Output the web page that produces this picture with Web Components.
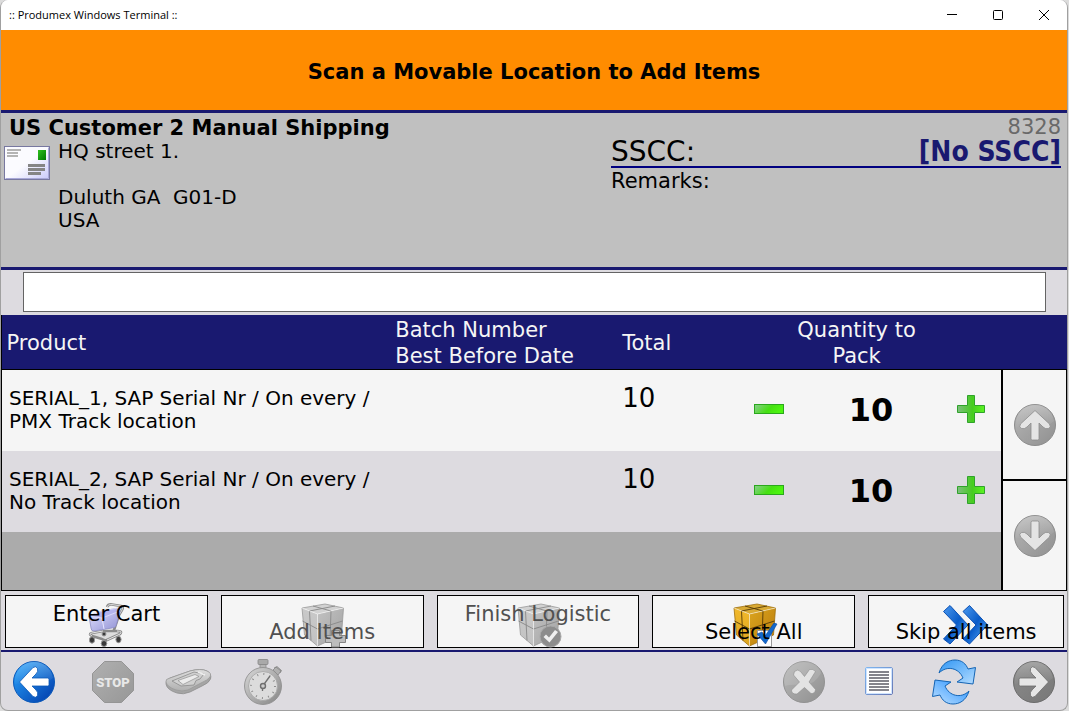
<!DOCTYPE html>
<html lang="en">
<head>
<meta charset="utf-8">
<meta name="viewport" content="width=device-width, initial-scale=1">
<title>:: Produmex Windows Terminal ::</title>
<style>
    body {
        margin: 0;
        background: #dcdcdc;
        font-family: "DejaVu Sans", Verdana, sans-serif;
        font-size: 20px;
        line-height: 23px;
        color: #000;
    }
</style>
</head>
<body>
<terminal-window>
    <title-bar>:: Produmex Windows Terminal ::</title-bar>
    <task-banner>Scan a Movable Location to Add Items</task-banner>
    <shipment-info sscc="[No SSCC]" number="8328">
        <span slot="customer">US Customer 2 Manual Shipping</span>
        <span slot="address">HQ street 1.<br><br>Duluth GA&nbsp; G01-D<br>USA</span>
    </shipment-info>
    <scan-field></scan-field>
    <pack-list></pack-list>
    <action-bar>
        <action-button icon="cart" align="top">Enter Cart</action-button>
        <action-button icon="box-add" disabled>Add Items</action-button>
        <action-button icon="box-done" align="top" disabled>Finish Logistic</action-button>
        <action-button icon="box-check">Select All</action-button>
        <action-button icon="skip">Skip all items</action-button>
    </action-bar>
    <tool-bar></tool-bar>
</terminal-window>

<script>
const ARROW = 'M24 9.500 L38.500 23 Q40.500 26 37.500 27.500 Q34.500 28.500 32 26 L28 22 V37.500 Q28 39 26.500 39 H21.500 Q20 39 20 37.500 V22 L16 26 Q13.500 28.500 10.500 27.500 Q7.500 26 9.500 23 Z';

// round button with an arrow, the arrow points up at angle 0
function disc(from, to, edge, fill, angle) {
    return `<svg viewBox="0 0 48 48" width="48" height="48">
        <defs>
            <linearGradient id="d" x1="0" y1="0" x2="1" y2="1"><stop offset="0" stop-color="${from}"/><stop offset="1" stop-color="${to}"/></linearGradient>
            <linearGradient id="s" x1="0" y1="0" x2="0" y2="1"><stop offset="0" stop-color="#fff" stop-opacity=".25"/><stop offset="1" stop-color="#fff" stop-opacity="0"/></linearGradient>
        </defs>
        <circle cx="24" cy="24" r="20.500" fill="url(#d)" stroke="${edge}"/>
        <path d="M5 26 A19 19 0 0 1 43 20 Q32 30 20 27 Q12 25 5 26Z" fill="url(#s)"/>
        <path d="${ARROW}" fill="${fill}" stroke="${edge}" stroke-width=".8" transform="rotate(${angle} 24 24)"/>
    </svg>`;
}

function box(c, extra) {
    return `<svg viewBox="0 0 46 44" width="46" height="44">
        <defs>
            <linearGradient id="l" x1="0" y1="0" x2="0" y2="1"><stop offset="0" stop-color="${c.light}"/><stop offset="1" stop-color="${c.mid}"/></linearGradient>
            <linearGradient id="r" x1="0" y1="0" x2="1" y2="1"><stop offset="0" stop-color="${c.mid}"/><stop offset="1" stop-color="${c.dark}"/></linearGradient>
        </defs>
        <path d="M3 5 L18.500 11 V43 L5.500 32Z" fill="url(#l)"/>
        <path d="M18.500 11 L44.500 5 L42.500 32 L18.500 43Z" fill="url(#r)"/>
        <path d="M3 5 L26 1 L44.500 5 L18.500 11Z" fill="${c.top}"/>
        <path d="M3 5 L26 1 L44.500 5 L42.500 32 L18.500 43 L5.500 32Z" fill="none" stroke="${c.edge}" stroke-width=".8" stroke-linejoin="round"/>
        <path d="M3.500 18 L18.500 26 L43.500 18 M10.500 8 L12 37.500 M32 8 L31 37.500 M10.500 8 L36 3 M14 3 L32 8" fill="none" stroke="${c.seam}" stroke-width=".9"/>
        <path d="M3 5 L18.500 11 L44.500 5 M18.500 11 V43" fill="none" stroke="#fff" stroke-opacity=".5"/>
        ${extra}
    </svg>`;
}

const GREY_BOX = { light: '#c9c9c9', mid: '#c2c2c2', dark: '#a2a2a2', top: '#d2d2d2', edge: '#999', seam: '#888' };
const GOLD_BOX = { light: '#f2b92c', mid: '#dba51f', dark: '#b97a0a', top: '#d9aa34', edge: '#a0700c', seam: '#543a08' };
const SWIRL = 'M9 15 C12 5 19 2 25 2 C32 2 36 6 38 11 L45.500 9.500 L43 26 L27 24 L33 20 C29 10 17 7 9 15Z';

const ICONS = {
    back: disc('#2aa8ff', '#0038a8', '#0a58b8', '#fff', 270),
    next: disc('#8c8c8c', '#777', '#6c6c6c', '#e6e6e6', 90),
    up: disc('#b6b6b6', '#909090', '#8c8c8c', '#e4e4e4', 0),
    down: disc('#b6b6b6', '#909090', '#8c8c8c', '#e4e4e4', 180),

    cancel: `<svg viewBox="0 0 48 48" width="48" height="48">
        <defs><linearGradient id="d" x1="0" y1="0" x2="1" y2="1"><stop offset="0" stop-color="#b8b8b8"/><stop offset="1" stop-color="#8f8f8f"/></linearGradient></defs>
        <circle cx="24" cy="24" r="20.500" fill="url(#d)" stroke="#929292"/>
        <path d="M5 28 A19 19 0 0 1 41 15 Q34 28 22 27 Q10 26 5 28Z" fill="#fff" fill-opacity=".12"/>
        <path d="M14.500 13.500 Q18 10.500 20.500 13.500 L24.500 18.500 L29.500 11.500 Q33 10.500 35.500 13.500 L29 24 L35.500 31.500 Q35 36 31 35.500 L24.500 29.500 L17 36 Q11.500 36.500 11.500 32 L19.500 24 L13.500 17Z" fill="#e3e3e3" stroke="#8d8d8d" stroke-width=".6"/>
    </svg>`,

    stop: `<svg viewBox="0 0 48 48" width="48" height="48">
        <defs><linearGradient id="d" x1="0" y1="0" x2="1" y2="1"><stop offset="0" stop-color="#b0b0b0"/><stop offset="1" stop-color="#979797"/></linearGradient></defs>
        <path d="M15.500 3.500 H32.500 L44.500 15.500 V32.500 L32.500 44.500 H15.500 L3.500 32.500 V15.500Z" fill="url(#d)" stroke="#959595"/>
        <text x="24" y="29" text-anchor="middle" font-family="Roboto, Liberation Sans, sans-serif" font-weight="900" font-size="13" fill="#e8e8e8">STOP</text>
    </svg>`,

    scanner: `<svg viewBox="0 0 48 48" width="48" height="48">
        <defs><linearGradient id="d" x1="0" y1="0" x2="0" y2="1"><stop offset="0" stop-color="#dedede"/><stop offset="1" stop-color="#b0b0b0"/></linearGradient></defs>
        <path d="M2 26 Q1 22 6 20 L26 13 Q37 10 43 13 Q48 16 46.500 21 Q45 25 38 28 L26 34 Q19 37 13 35 Q3 32 2 26Z" fill="#a5a5a5" stroke="#8d8d8d" stroke-width=".8"/>
        <path d="M2 24 Q1 21 6 20 L26 13 Q37 10 43 13 Q48 15 46 19 Q44 22 37 25 L24 32 Q18 34 12 32 Q3 29 2 24Z" fill="url(#d)" stroke="#999" stroke-width=".8"/>
        <path d="M8 23 L30 14 L40 16 L36 21 L32 22.500 L30 27 L17 28Z" fill="#d0d0d0" stroke="#8c8c8c" stroke-width=".8"/>
        <path d="M14 22.500 L31 16.500 L35 18.500 L19 26.500Z" fill="#ececec" stroke="#909090" stroke-width=".7"/>
        <path d="M34 14 L41 17" stroke="#eee" stroke-width="1.500"/>
    </svg>`,

    timer: `<svg viewBox="0 0 48 48" width="48" height="48">
        <defs><linearGradient id="d" x1="0" y1="0" x2="1" y2="1"><stop offset="0" stop-color="#d8d8d8"/><stop offset="1" stop-color="#858585"/></linearGradient></defs>
        <rect x="21" y="6" width="6" height="6" fill="#b5b5b5" stroke="#8c8c8c" stroke-width=".8"/>
        <rect x="19" y="1.500" width="10" height="5" rx="1" fill="#a9a9a9" stroke="#858585" stroke-width=".8"/>
        <path d="M34 12 L37 9 L42 13 L39 17Z M35 10 L38 8.500 L42.500 12.500 L41 15" fill="#b0b0b0" stroke="#858585" stroke-width=".8"/>
        <circle cx="24" cy="28" r="18.500" fill="url(#d)" stroke="#8a8a8a" stroke-width=".8"/>
        <circle cx="24" cy="28" r="14.500" fill="#dcdcdc" stroke="#a3a3a3" stroke-width=".8"/>
        <circle cx="24" cy="28" r="12" fill="none" stroke="#8d8d8d" stroke-width="2" stroke-dasharray="1 5.283"/>
        <path d="M23 29 L31 18" stroke="#6f6f6f" stroke-width="1.300"/>
        <circle cx="24" cy="28" r="2.500" fill="#ccc" stroke="#6f6f6f" stroke-width="1.400"/>
        <path d="M23.500 30 V33" stroke="#6f6f6f" stroke-width="1.300"/>
    </svg>`,

    list: `<svg viewBox="0 0 48 48" width="48" height="48">
        <defs><linearGradient id="d" x1="0" y1="0" x2="1" y2="1"><stop offset="0" stop-color="#7fb6f0"/><stop offset="1" stop-color="#6878b4"/></linearGradient></defs>
        <rect x="10.500" y="9.500" width="27" height="27" rx="1.500" fill="#fff" stroke="url(#d)"/>
        <rect x="11.500" y="10.500" width="25" height="25" fill="none" stroke="#cfe4ff"/>
        <path d="M14 14h20M14 17h20M14 20h20M14 23h20M14 26h20M14 29h20M14 32h20" stroke="#84848c" stroke-width="1.800"/>
    </svg>`,

    refresh: `<svg viewBox="0 0 48 48" width="48" height="48">
        <defs><linearGradient id="d" x1="0" y1="0" x2="1" y2="1"><stop offset="0" stop-color="#2f96f5"/><stop offset="1" stop-color="#b4dcff"/></linearGradient>
        <linearGradient id="e" x1="1" y1="0" x2="0" y2="1"><stop offset="0" stop-color="#c0e2ff"/><stop offset="1" stop-color="#1e8cff"/></linearGradient></defs>
        <path d="${SWIRL}" fill="url(#d)" stroke="#1464b4" stroke-linejoin="round"/>
        <path d="${SWIRL}" fill="url(#e)" stroke="#1464b4" stroke-linejoin="round" transform="rotate(180 24 24)"/>
    </svg>`,

    minus: `<svg viewBox="0 0 30 10" width="30" height="10">
        <defs><linearGradient id="d" x1="0" y1="0" x2="1" y2=".3"><stop offset=".1" stop-color="#7fcf7c"/><stop offset=".6" stop-color="#45e012"/><stop offset="1" stop-color="#4df510"/></linearGradient></defs>
        <rect x=".5" y=".5" width="29" height="9" fill="url(#d)" stroke="#2aa81c"/>
    </svg>`,

    plus: `<svg viewBox="0 0 28 28" width="28" height="28">
        <defs><linearGradient id="d" x1="0" y1="0" x2="1" y2="0"><stop offset="0" stop-color="#7fbd80"/><stop offset=".55" stop-color="#46cc20"/><stop offset="1" stop-color="#5cf522"/></linearGradient></defs>
        <path d="M10.500 .5H17.500V10.500H27.500V17.500H17.500V27.500H10.500V17.500H.5V10.500H10.500Z" fill="url(#d)" stroke="#2fa32a"/>
    </svg>`,

    envelope: `<svg viewBox="0 0 46 34" width="46" height="34">
        <defs><linearGradient id="d" x1="0" y1="0" x2="1" y2="1"><stop offset=".5" stop-color="#fbfbff"/><stop offset="1" stop-color="#c8c8fa"/></linearGradient>
        <linearGradient id="g" x1="0" y1="0" x2="1" y2="1"><stop offset="0" stop-color="#30c020"/><stop offset="1" stop-color="#007800"/></linearGradient></defs>
        <rect x=".5" y=".5" width="45" height="33" fill="url(#d)" stroke="#7878a0"/>
        <path d="M1.500 32.500 H44.500 V1.500" fill="none" stroke="#a8a8d8"/>
        <path d="M3 4h14M3 7h11M3 10h11" stroke="#b4b4b4" stroke-width="2"/>
        <path d="M24 19.500h17M24 23.500h17M24 27.500h13" stroke="#858585" stroke-width="3"/>
        <rect x="34" y="4" width="8" height="10" fill="url(#g)"/>
    </svg>`,

    cart: `<svg viewBox="0 0 46 44" width="46" height="44">
        <defs><linearGradient id="d" x1="0" y1="0" x2="1" y2="1"><stop offset="0" stop-color="#e4e4ff"/><stop offset="1" stop-color="#9090d4"/></linearGradient></defs>
        <path d="M24 4 Q25 1 29 1.500 L38 3 Q41 4 39 7 L36 12 L30 30" fill="none" stroke="#8a8a8a" stroke-width="2.600"/>
        <path d="M24 4 Q25 1 29 1.500 L38 3 Q41 4 39 7 L36 12" fill="none" stroke="#d8d8d8" stroke-width="1"/>
        <path d="M9 33 Q5 31 9 30 L20 28 L34 28 Q40 28 37 31 L24 37 Q22 38 19 36Z" fill="#ddd" stroke="#8a8a8a" stroke-width="2.600" stroke-linejoin="round"/>
        <path d="M9 33 Q5 31 9 30 L20 28 M34 28 Q40 28 37 31 L24 37" fill="none" stroke="#e4e4e4"/>
        <path d="M6 13 L19 8 L36 5 L37 9 L33 23 Q32 25 29 25 L11 28 Q8 28 8 25Z" fill="url(#d)" stroke="#8c8cc4" stroke-width=".8"/>
        <path d="M6 13 L19 15 L37 8 L35 5 L19 8Z" fill="#b4b4ec" stroke="#e8e8ff" stroke-width=".7"/>
        <path d="M19 15 L21 26" stroke="#e6e6ff"/>
        <g fill="#3a3a3a" stroke="#999"><ellipse cx="9" cy="37" rx="2.600" ry="3.200"/><ellipse cx="21" cy="40.500" rx="2.800" ry="3"/><ellipse cx="35.500" cy="36.500" rx="2.600" ry="3.200"/><ellipse cx="21" cy="31" rx="2" ry="2"/></g>
    </svg>`,

    // the plus runs past the lower edge of its button
    'box-add': box(GREY_BOX, '<path d="M32.500 27.500h8v5h6v7h-6v4.500h-8v-4.500h-6v-7h6z" fill="#bdbdbd" stroke="#858585"/>'),
    'box-done': box(GREY_BOX, `<circle cx="35.500" cy="33.500" r="10.500" fill="#8d8d8d" stroke="#a8a8a8"/>
        <path d="M28.500 34 L31 31.500 L34 34.500 L40 27 L43 29 L34.500 39.500Z" fill="#efefef"/>`),
    'box-check': box(GOLD_BOX, `<rect x="26.500" y="27.500" width="14" height="16" fill="#fff" stroke="#999"/>
        <path d="M26 31 L31 29 L34 33 L43 20 L46 21 L34.500 41Z" fill="#1268cc" stroke="#0a48a0" stroke-width=".6"/>`),

    skip: `<svg viewBox="0 0 46 44" width="46" height="44">
        <defs><linearGradient id="d" x1="0" y1="0" x2="1" y2="1"><stop offset="0" stop-color="#4c9af0"/><stop offset=".5" stop-color="#0a5cc8"/><stop offset="1" stop-color="#5cb0ff"/></linearGradient></defs>
        <g fill="url(#d)" stroke="#0a50b4">
            <path d="M.5 8.500 L7 2.500 L25 22 L7 41 L.5 36 L13.500 22Z"/>
            <path d="M20 8.500 L26.500 2.500 L44.500 22 L26.500 41 L20 36 L33 22Z"/>
        </g>
    </svg>`
};

class AppIcon extends HTMLElement {
    connectedCallback() {
        this.attachShadow({ mode: 'open' });
        this.shadowRoot.innerHTML = `
            <style>
                :host { display: inline-flex; flex: none; }
                svg { display: block; overflow: visible; }
            </style>
            ${ICONS[this.getAttribute('name')] || ''}
        `;
    }
}
customElements.define('app-icon', AppIcon);

class TerminalWindow extends HTMLElement {
    connectedCallback() {
        this.attachShadow({ mode: 'open' });
        this.shadowRoot.innerHTML = `
            <style>
                :host {
                    display: flex;
                    flex-direction: column;
                    box-sizing: border-box;
                    min-height: 100vh;
                    margin-right: 1px;
                    border: 1px solid #a0a0a0;
                    border-top: 0;
                    border-radius: 8px;
                    background: #dddbe0;
                    overflow: hidden;
                }
                ::slotted(pack-list) { flex: 1; }
            </style>
            <slot></slot>
        `;
    }
}
customElements.define('terminal-window', TerminalWindow);

class TitleBar extends HTMLElement {
    connectedCallback() {
        this.attachShadow({ mode: 'open' });
        this.shadowRoot.innerHTML = `
            <style>
                :host {
                    display: flex;
                    align-items: center;
                    height: 30px;
                    background: #fff;
                    font: 11px/16px "Open Sans", "Segoe UI", sans-serif;
                }
                .title { flex: 1; padding-left: 8px; }
                button {
                    display: grid;
                    place-items: center;
                    width: 46px;
                    height: 30px;
                    padding: 0;
                    border: 0;
                    background: none;
                }
                button:hover { background: #e5e5e5; }
                svg { fill: none; stroke: #000; }
            </style>
            <span class="title"><slot></slot></span>
            <button aria-label="Minimize"><svg width="10" height="10"><path d="M0 4.500H10"/></svg></button>
            <button aria-label="Maximize"><svg width="10" height="10"><rect x=".5" y=".5" width="9" height="9" rx="1"/></svg></button>
            <button aria-label="Close"><svg width="10" height="10"><path d="M0 0L10 10M10 0L0 10"/></svg></button>
        `;
    }
}
customElements.define('title-bar', TitleBar);

class TaskBanner extends HTMLElement {
    connectedCallback() {
        this.attachShadow({ mode: 'open' });
        this.shadowRoot.innerHTML = `
            <style>
                :host {
                    display: grid;
                    place-items: center;
                    box-sizing: border-box;
                    height: 83px;
                    padding-top: 4px;
                    background: #ff8c00;
                    border-bottom: 3px solid #191970;
                }
                h1 { margin: 0; font-size: 21px; line-height: 26px; }
            </style>
            <h1><slot></slot></h1>
        `;
    }
}
customElements.define('task-banner', TaskBanner);

class ShipmentInfo extends HTMLElement {
    connectedCallback() {
        this.attachShadow({ mode: 'open' });
        this.shadowRoot.innerHTML = `
            <style>
                :host {
                    display: grid;
                    grid-template-columns: 599fr 450fr;
                    column-gap: 8px;
                    min-height: 147px;
                    padding: 4px 6px 3px 3px;
                    background: #c0c0c0;
                    border-bottom: 3px solid #191970;
                }
                h2 {
                    margin: 0;
                    padding-left: 5px;
                    font-size: 21px;
                    line-height: 23px;
                }
                .place { display: flex; gap: 8px; }
                app-icon { padding-top: 6px; }
                address { font-style: normal; }
                .number {
                    text-align: right;
                    font-size: 21px;
                    line-height: 20px;
                    color: #696969;
                }
                .sscc {
                    display: flex;
                    justify-content: space-between;
                    align-items: center;
                    height: 29px;
                    border-bottom: 2px solid #000080;
                    font-size: 28px;
                }
                .sscc b {
                    font-family: "DejaVu Sans Condensed", Tahoma, sans-serif;
                    font-size: 28px;
                    color: #191970;
                }
                .remarks { padding-top: 2px; font-size: 21px; }
            </style>
            <div>
                <h2><slot name="customer"></slot></h2>
                <div class="place">
                    <app-icon name="envelope"></app-icon>
                    <address><slot name="address"></slot></address>
                </div>
            </div>
            <div>
                <div class="number">${this.getAttribute('number')}</div>
                <div class="sscc"><span>SSCC:</span><b>${this.getAttribute('sscc')}</b></div>
                <div class="remarks">Remarks:</div>
            </div>
        `;
    }
}
customElements.define('shipment-info', ShipmentInfo);

class ScanField extends HTMLElement {
    connectedCallback() {
        this.attachShadow({ mode: 'open' });
        this.shadowRoot.innerHTML = `
            <style>
                :host { display: flex; padding: 2px 21px 3px 22px; }
                input {
                    flex: 1;
                    box-sizing: border-box;
                    height: 40px;
                    padding: 0 8px;
                    border: 1px solid #646464;
                    background: #fff;
                    font: inherit;
                    outline: 0;
                }
            </style>
            <input type="text" aria-label="Scan">
        `;
    }
}
customElements.define('scan-field', ScanField);

class PackList extends HTMLElement {
    connectedCallback() {
        const rows = [
            { name: 'SERIAL_1, SAP Serial Nr / On every /<br>PMX Track location', total: 10, qty: 10 },
            { name: 'SERIAL_2, SAP Serial Nr / On every /<br>No Track location', total: 10, qty: 10 }
        ];
        this.attachShadow({ mode: 'open' });
        this.shadowRoot.innerHTML = `
            <style>
                :host {
                    display: grid;
                    grid-template-columns: 1fr 66px;
                    background: #191970;
                }
                .list {
                    background: #ababab;
                    box-shadow: inset 1px 0 #000;
                    border-bottom: 1px solid #000;
                }
                table {
                    width: 100%;
                    table-layout: fixed;
                    border-collapse: collapse;
                }
                th, td { padding: 0; text-align: left; }
                th {
                    box-sizing: border-box;
                    height: 54px;
                    padding-top: 2px;
                    background: #191970;
                    color: #f5f5f5;
                    font-size: 21px;
                    font-weight: normal;
                    line-height: 26px;
                }
                thead { border-bottom: 1px solid #000; }
                th:first-child { padding-left: 5px; }
                th.qty { text-align: center; }
                tbody tr { height: 81px; background: #f5f5f5; }
                tbody tr:nth-child(even) { background: #dddbe0; }
                td:first-child { padding-left: 7px; border-left: 1px solid #000; }
                .batch, .total { padding-left: 7px; }
                td.total {
                    padding-top: 12px;
                    vertical-align: top;
                    font-size: 26px;
                    line-height: 32px;
                }
                td.minus, td.plus { padding-bottom: 3px; }
                td.value { text-align: center; font-size: 32px; font-weight: bold; }
                td button {
                    display: block;
                    margin: 0 auto;
                    padding: 0;
                    border: 0;
                    background: none;
                }
                td button app-icon { display: block; }
                td.plus button { margin-right: 16px; }
                .scroll {
                    display: grid;
                    grid-template-rows: 1fr 1fr;
                    gap: 2px;
                    margin-top: 54px;
                    padding: 1px 1px 1px 2px;
                    background: #000;
                }
                .scroll button {
                    display: grid;
                    place-items: center;
                    padding: 0;
                    border: 0;
                    background: #f5f5f5;
                }
            </style>
            <div class="list">
                <table>
                    <colgroup>
                        <col style="width: 38.700%"><col style="width: 22.700%"><col style="width: 9.700%">
                        <col style="width: 11.400%"><col style="width: 9%"><col>
                    </colgroup>
                    <thead>
                        <tr>
                            <th>Product</th>
                            <th class="batch">Batch Number<br>Best Before Date</th>
                            <th class="total">Total</th>
                            <th class="qty" colspan="3">Quantity to<br>Pack</th>
                        </tr>
                    </thead>
                    <tbody>
                        ${rows.map(r => `
                        <tr>
                            <td>${r.name}</td>
                            <td class="batch"></td>
                            <td class="total">${r.total}</td>
                            <td class="minus"><button aria-label="Less"><app-icon name="minus"></app-icon></button></td>
                            <td class="value">${r.qty}</td>
                            <td class="plus"><button aria-label="More"><app-icon name="plus"></app-icon></button></td>
                        </tr>`).join('')}
                    </tbody>
                </table>
            </div>
            <div class="scroll">
                <button aria-label="Scroll up"><app-icon name="up"></app-icon></button>
                <button aria-label="Scroll down"><app-icon name="down"></app-icon></button>
            </div>
        `;
    }
}
customElements.define('pack-list', PackList);

class ActionBar extends HTMLElement {
    connectedCallback() {
        this.attachShadow({ mode: 'open' });
        this.shadowRoot.innerHTML = `
            <style>
                :host {
                    display: grid;
                    grid-template-columns: repeat(4, 203fr) 196fr;
                    gap: 13px;
                    padding: 4px 3px 2px 4px;
                    border-bottom: 2px solid #191970;
                }
            </style>
            <slot></slot>
        `;
    }
}
customElements.define('action-bar', ActionBar);

class ActionButton extends HTMLElement {
    connectedCallback() {
        const disabled = this.hasAttribute('disabled') ? 'disabled' : '';
        this.attachShadow({ mode: 'open' });
        this.shadowRoot.innerHTML = `
            <style>
                :host { display: grid; }
                button {
                    display: grid;
                    justify-items: center;
                    align-items: end;
                    height: 53px;
                    padding: 0;
                    border: 1px solid #000;
                    background: #f5f5f5;
                    color: #000;
                    font: inherit;
                    font-size: 21px;
                    line-height: 26px;
                }
                button:disabled { color: #505050; }
                /* the caption is drawn over the icon */
                app-icon, span { grid-area: 1 / 1; }
                span { z-index: 1; padding: 5px 0 2px; white-space: nowrap; }
                :host([align="top"]) span { align-self: start; }
            </style>
            <button ${disabled}>
                <app-icon name="${this.getAttribute('icon')}"></app-icon>
                <span><slot></slot></span>
            </button>
        `;
    }
}
customElements.define('action-button', ActionButton);

class ToolBar extends HTMLElement {
    connectedCallback() {
        this.attachShadow({ mode: 'open' });
        this.shadowRoot.innerHTML = `
            <style>
                :host {
                    display: flex;
                    align-items: center;
                    justify-content: space-between;
                    box-sizing: border-box;
                    height: 58px;
                    padding: 2px 9px 0;
                }
                div { display: flex; gap: 27px; }
                button { display: block; padding: 0; border: 0; background: none; }
                app-icon { display: block; }
                .back { margin-right: 4px; }
                .next { margin-left: 5px; }
            </style>
            <div>
                <button class="back" aria-label="Back"><app-icon name="back"></app-icon></button>
                <button aria-label="Stop" disabled><app-icon name="stop"></app-icon></button>
                <button aria-label="Scanner" disabled><app-icon name="scanner"></app-icon></button>
                <button aria-label="Timer" disabled><app-icon name="timer"></app-icon></button>
            </div>
            <div>
                <button aria-label="Cancel" disabled><app-icon name="cancel"></app-icon></button>
                <button aria-label="List"><app-icon name="list"></app-icon></button>
                <button aria-label="Refresh"><app-icon name="refresh"></app-icon></button>
                <button class="next" aria-label="Next" disabled><app-icon name="next"></app-icon></button>
            </div>
        `;
    }
}
customElements.define('tool-bar', ToolBar);
</script>
</body>
</html>
